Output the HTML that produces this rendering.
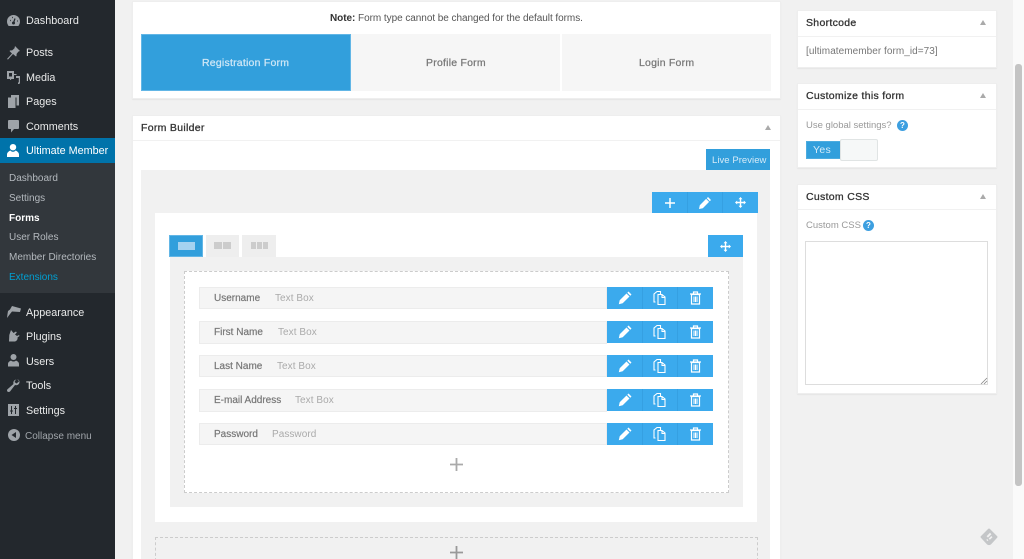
<!DOCTYPE html>
<html><head><meta charset="utf-8"><style>
*{box-sizing:border-box}
html,body{margin:0;padding:0;width:1024px;height:559px;overflow:hidden;background:#f1f1f1}
body{font-family:"Liberation Sans",sans-serif;position:relative}
.a,.t{position:absolute}
.t{white-space:nowrap;line-height:14px;filter:blur(.35px)}
.m{font-size:10.8px;color:#e9eaea;left:26px}
.s{font-size:10px;color:#b4b9be;left:9px}
.card{position:absolute;background:#fff;box-shadow:0 1px 1px rgba(0,0,0,.05);border:1px solid #eee}
.b{position:absolute;background:#3baaed}
.l{font-size:10px;color:#777;-webkit-text-stroke:.2px #777}
.g{font-size:10px;color:#aaa;letter-spacing:.05px}
.h{font-size:10.5px;color:#333;letter-spacing:.3px;-webkit-text-stroke:.3px #333}
.tb{font-size:10.5px;letter-spacing:.22px;-webkit-text-stroke:.25px currentColor}
svg{position:absolute;overflow:visible;filter:blur(.3px)}
.i{fill:#9ea3a8}
</style></head><body>
<div class="a" style="left:0;top:0;width:115px;height:559px;background:#23282d"></div>
<div class="a" style="left:0;top:163px;width:115px;height:130px;background:#32373c"></div>
<div class="a" style="left:0;top:138px;width:115px;height:25px;background:#0073aa"></div>
<div class="a" style="left:1013px;top:0;width:11px;height:559px;background:#fafafa"></div>
<div class="a" style="left:1015px;top:64px;width:7px;height:422px;background:#c4c4c4;border-radius:3px"></div>

<!-- sidebar icons -->
<svg style="left:7px;top:14px" width="14" height="13" viewBox="0 0 14 13"><path class="i" d="M6.5 1a6.500 6.500 0 0 0-6.500 6.500c0 1.800.6 3 1.600 4.500h9.800c1-1.500 1.600-2.700 1.600-4.500A6.500 6.500 0 0 0 6.500 1z"/><circle cx="6.500" cy="9" r="1.500" fill="#23282d"/><path d="M6.500 9l1.500-4.500M3 6.500h.8M10 7h.8M5 3.500h.8" stroke="#23282d" stroke-width="1.200"/></svg>
<svg style="left:7px;top:46px" width="13" height="14" viewBox="0 0 13 14"><path class="i" d="M8 0l5 5-1.500.5-2 2.500c.3 1.200 0 2-.5 2.500L6 8 1 13.500 0 13l5-5.500L2.500 5c.6-.6 1.500-.8 2.500-.5l2.500-2.200z"/></svg>
<svg style="left:7px;top:71px" width="13" height="13" viewBox="0 0 13 13"><path class="i" fill-rule="evenodd" d="M0 0h7v3h2.500v1H7v4H4.500l-1 1H3V8H0zM2 2v3.500h3V2z"/><path class="i" d="M9 5h4v7c0 .8-1 1-2 1v-1.500c.5 0 .8-.2.800-.5V7H9z"/></svg>
<svg style="left:8px;top:95px" width="11" height="13" viewBox="0 0 11 13"><path class="i" d="M3 0h8v10.500H8.500V2.500H3z"/><path class="i" d="M0 2.500h7.500V13H0z"/></svg>
<svg style="left:8px;top:120px" width="11" height="13" viewBox="0 0 11 13"><path class="i" d="M1 0h9a1 1 0 0 1 1 1v7a1 1 0 0 1-1 1H6l-3 3.500V9H1a1 1 0 0 1-1-1V1a1 1 0 0 1 1-1z"/></svg>
<svg style="left:7px;top:144px" width="12" height="13" viewBox="0 0 12 13"><circle cx="6" cy="3.200" r="3.200" fill="#fff"/><path fill="#fff" d="M0 13v-2.500c0-2 2-3.500 3.500-4 .7 1 1.500 1.300 2.500 1.300s1.800-.3 2.500-1.300c1.500.5 3.500 2 3.500 4V13z"/></svg>
<svg style="left:7px;top:306px" width="14" height="12" viewBox="0 0 14 12"><path class="i" d="M5 0l9 2.500-1 3.500-8-.5-2 2.500-3 4 .5-4 .5-3 2-1.500z"/></svg>
<svg style="left:7px;top:330px" width="13" height="13" viewBox="0 0 13 13"><path class="i" d="M4 0l2.500 3L9 1.500l.8 1L8 4.500l2 1.500 2-1 .5 1-2 1.500c.5 2-1 3.500-2.500 4H2l.3-6.500z"/></svg>
<svg style="left:8px;top:354px" width="11" height="13" viewBox="0 0 11 13"><circle cx="5.500" cy="3" r="3" class="i"/><path class="i" d="M0 12.500V10c0-2 2-3 3-3.500.7.700 1.500 1 2.500 1s1.800-.3 2.500-1c1 .5 3 1.500 3 3.500v2.500z"/></svg>
<svg style="left:7px;top:379px" width="13" height="13" viewBox="0 0 13 13"><path class="i" d="M9 0c2 0 3.500 1.200 3.500 3 0 2.300-2.300 3.800-4.500 3L3 12.500c-1 1-3 .5-3-1 0-.5.200-.9.500-1.200L6.500 5c-.7-2 .5-4 2.500-4.500L7.500 3l2 1.500L12 2.500C11.500 1 10.500 0 9 0z"/></svg>
<svg style="left:8px;top:404px" width="11" height="12" viewBox="0 0 11 12"><path class="i" d="M0 0h11v12H0z"/><path d="M3.500 2v8M7.500 2v8" stroke="#23282d" stroke-width="1"/><path d="M2 7h3M6 4.500h3" stroke="#23282d" stroke-width="1"/></svg>
<svg style="left:8px;top:429px" width="12" height="12" viewBox="0 0 12 12"><circle cx="6" cy="6" r="6" class="i"/><path d="M8 3v6L3.500 6z" fill="#23282d"/></svg>

<!-- sidebar text -->
<div class="t m" style="top:14px">Dashboard</div>
<div class="t m" style="top:46px">Posts</div>
<div class="t m" style="top:71px">Media</div>
<div class="t m" style="top:95px">Pages</div>
<div class="t m" style="top:120px">Comments</div>
<div class="t m" style="top:144px;color:#fff">Ultimate Member</div>
<div class="t s" style="top:172px">Dashboard</div>
<div class="t s" style="top:192px">Settings</div>
<div class="t s" style="top:212px;color:#fff;font-weight:bold">Forms</div>
<div class="t s" style="top:231px">User Roles</div>
<div class="t s" style="top:251px">Member Directories</div>
<div class="t s" style="top:271px;color:#00a0d2">Extensions</div>
<div class="t m" style="top:306px">Appearance</div>
<div class="t m" style="top:330px">Plugins</div>
<div class="t m" style="top:355px">Users</div>
<div class="t m" style="top:379px">Tools</div>
<div class="t m" style="top:404px">Settings</div>
<div class="t s" style="top:430px;left:25px;color:#a0a5aa">Collapse menu</div>

<!-- top card -->
<div class="card" style="left:132px;top:1px;width:649px;height:98px"></div>
<div class="t" style="left:330px;top:12px;font-size:10px;color:#555;letter-spacing:-.05px"><b style="color:#333">Note:</b> Form type cannot be changed for the default forms.</div>
<div class="a" style="left:141px;top:34px;width:210px;height:57px;background:#329fdc;border:1px solid #62b6e6"></div>
<div class="a" style="left:351px;top:34px;width:209px;height:57px;background:#f6f6f6"></div>
<div class="a" style="left:562px;top:34px;width:209px;height:57px;background:#f6f6f6"></div>
<div class="t tb" style="left:202px;top:56px;color:#cfe7f6">Registration Form</div>
<div class="t tb" style="left:426px;top:56px;color:#777">Profile Form</div>
<div class="t tb" style="left:639px;top:56px;color:#777">Login Form</div>

<!-- form builder -->
<div class="card" style="left:132px;top:115px;width:649px;height:460px"></div>
<div class="a" style="left:133px;top:140px;width:647px;height:1px;background:#f1f1f1"></div>
<div class="t h" style="left:141px;top:121px">Form Builder</div>
<div class="a" style="left:765px;top:125px;border:3.500px solid transparent;border-top:0;border-bottom:5px solid #aaa"></div>
<div class="a" style="left:706px;top:149px;width:64px;height:21px;background:#329fdc"></div>
<div class="t" style="left:712px;top:154px;font-size:9.500px;color:#d6ebf8;letter-spacing:.05px">Live Preview</div>
<div class="a" style="left:141px;top:170px;width:629px;height:400px;background:#f1f1f1"></div>
<div class="a" style="left:155px;top:213px;width:602px;height:309px;background:#fff"></div>

<div class="b" style="left:652px;top:192px;width:105.500px;height:21px"></div>
<div class="a" style="left:687px;top:192px;width:1px;height:21px;background:#35a0e2"></div>
<div class="a" style="left:722px;top:192px;width:1px;height:21px;background:#35a0e2"></div>
<svg style="left:665px;top:198px" width="10" height="10"><path d="M5 0v10M0 5h10" stroke="#fff" stroke-width="1.500"/></svg>
<svg style="left:699px;top:197px" width="12" height="12" viewBox="0 0 12 12"><path fill="#fff" d="M9 0l3 3-1.200 1.200-3-3zM7.100 1.900l3 3L3.800 11.200 0 12l.8-3.800z"/></svg>
<svg style="left:735px;top:197px" width="11" height="11" viewBox="0 0 11 11"><path fill="#fff" d="M5.500 0L7.500 2.200H6.200V4.800H8.800V3.500L11 5.500 8.800 7.500V6.200H6.200V8.800H7.500L5.500 11 3.500 8.800H4.800V6.200H2.200V7.500L0 5.500 2.200 3.500V4.800H4.800V2.200H3.500z"/></svg>

<div class="a" style="left:169px;top:235px;width:34px;height:22px;background:#329fdc;border:1px solid #62b6e6"></div>
<div class="a" style="left:178px;top:242px;width:17px;height:8px;background:#a5d2f0"></div>
<div class="a" style="left:206px;top:235px;width:33px;height:22px;background:#eeeeee"></div>
<div class="a" style="left:214px;top:242px;width:8px;height:7px;background:#ccc"></div>
<div class="a" style="left:223px;top:242px;width:8px;height:7px;background:#ccc"></div>
<div class="a" style="left:242px;top:235px;width:34px;height:22px;background:#eeeeee"></div>
<div class="a" style="left:251px;top:242px;width:5px;height:7px;background:#ccc"></div>
<div class="a" style="left:257px;top:242px;width:5px;height:7px;background:#ccc"></div>
<div class="a" style="left:263px;top:242px;width:5px;height:7px;background:#ccc"></div>
<div class="b" style="left:708px;top:235px;width:35px;height:22px"></div>
<svg style="left:720px;top:241px" width="11" height="11" viewBox="0 0 11 11"><path fill="#fff" d="M5.500 0L7.500 2.200H6.200V4.800H8.800V3.500L11 5.500 8.800 7.500V6.200H6.200V8.800H7.500L5.500 11 3.500 8.800H4.800V6.200H2.200V7.500L0 5.500 2.200 3.500V4.800H4.800V2.200H3.500z"/></svg>

<div class="a" style="left:170px;top:257px;width:573px;height:250px;background:#f1f1f1"></div>
<div class="a" style="left:184px;top:271px;width:545px;height:222px;background:#fff;border:1px dashed #ccc"></div>

<!-- rows -->
<div class="a" style="left:199px;top:287px;width:408px;height:22px;background:#f5f5f5;border:1px solid #ececec"></div>
<div class="a" style="left:199px;top:321px;width:408px;height:23px;background:#f5f5f5;border:1px solid #ececec"></div>
<div class="a" style="left:199px;top:355px;width:408px;height:22px;background:#f5f5f5;border:1px solid #ececec"></div>
<div class="a" style="left:199px;top:389px;width:408px;height:23px;background:#f5f5f5;border:1px solid #ececec"></div>
<div class="a" style="left:199px;top:423px;width:408px;height:22px;background:#f5f5f5;border:1px solid #ececec"></div>
<div class="t l" style="left:214px;top:292px">Username</div><div class="t g" style="left:275px;top:292px">Text Box</div>
<div class="t l" style="left:214px;top:326px">First Name</div><div class="t g" style="left:278px;top:326px">Text Box</div>
<div class="t l" style="left:214px;top:360px">Last Name</div><div class="t g" style="left:277px;top:360px">Text Box</div>
<div class="t l" style="left:214px;top:394px">E-mail Address</div><div class="t g" style="left:295px;top:394px">Text Box</div>
<div class="t l" style="left:214px;top:428px">Password</div><div class="t g" style="left:272px;top:428px">Password</div>

<svg style="left:607px;top:287px" width="106" height="160" viewBox="0 0 106 160">
<defs>
<g id="r"><rect width="106" height="22" fill="#3baaed"/><path d="M35.500 0v22M70.500 0v22" stroke="#35a0e2"/>
<path fill="#fff" d="M21.500 4.500l3 3-1.200 1.200-3-3zM19.500 6.500l3 3-6.800 6.800-3.900.9.900-3.900z"/>
<path fill="none" stroke="#fff" stroke-width="1.100" d="M48.500 15h-1.500V7l3-2.500h3.500v2.500M51 7.500h4l3 2.500v7.500h-7zM55 7.500v3h3"/>
<path fill="none" stroke="#fff" stroke-width="1.200" d="M84.500 7.500h8v9.500h-8zM83 7h11M86.500 6.500v-1.500h4v1.500"/><path stroke="#fff" d="M87 9.500v5.500M88.500 9.500v5.500M90 9.500v5.500"/></g>
</defs>
<use href="#r" y="0"/><use href="#r" y="34"/><use href="#r" y="68"/><use href="#r" y="102"/><use href="#r" y="136"/>
</svg>

<svg style="left:450px;top:458px" width="13" height="13"><path d="M6.500 0v13M0 6.500h13" stroke="#aaa" stroke-width="1.800"/></svg>
<div class="a" style="left:155px;top:537px;width:603px;height:40px;border:1px dashed #ccc"></div>
<svg style="left:450px;top:546px" width="13" height="13"><path d="M6.500 0v13M0 6.500h13" stroke="#999" stroke-width="1.800"/></svg>

<!-- right cards -->
<div class="card" style="left:797px;top:10px;width:200px;height:58px"></div>
<div class="a" style="left:798px;top:36px;width:198px;height:1px;background:#f1f1f1"></div>
<div class="t h" style="left:806px;top:16px">Shortcode</div>
<div class="t g" style="left:806px;top:45px;color:#777">[ultimatemember form_id=73]</div>
<div class="a" style="left:980px;top:20px;border:3.500px solid transparent;border-top:0;border-bottom:5px solid #aaa"></div>

<div class="card" style="left:797px;top:83px;width:200px;height:85px"></div>
<div class="a" style="left:798px;top:109px;width:198px;height:1px;background:#f1f1f1"></div>
<div class="t h" style="left:806px;top:89px">Customize this form</div>
<div class="t g" style="left:806px;top:119px;color:#999;font-size:9.500px;letter-spacing:0">Use global settings?</div>
<div class="a" style="left:897px;top:120px;width:11px;height:11px;border-radius:50%;background:#3d9fe0;color:#fff;font:bold 8px/11px 'Liberation Sans',sans-serif;text-align:center">?</div>
<div class="a" style="left:806px;top:141px;width:35px;height:18px;background:#329fdc;border:1px solid #4dacdf"></div>
<div class="a" style="left:840px;top:139px;width:38px;height:22px;background:#f6f8f8;border:1px solid #e0e4e4;border-radius:2px"></div>
<div class="t" style="left:813px;top:143px;font-size:10.500px;color:#d6ebf8;letter-spacing:.3px">Yes</div>

<div class="card" style="left:797px;top:184px;width:200px;height:210px"></div>
<div class="a" style="left:798px;top:209px;width:198px;height:1px;background:#f1f1f1"></div>
<div class="t h" style="left:806px;top:190px">Custom CSS</div>
<div class="t g" style="left:806px;top:219px;color:#999;font-size:9.500px;letter-spacing:0">Custom CSS</div>
<div class="a" style="left:863px;top:220px;width:11px;height:11px;border-radius:50%;background:#3d9fe0;color:#fff;font:bold 8px/11px 'Liberation Sans',sans-serif;text-align:center">?</div>
<div class="a" style="left:805px;top:241px;width:183px;height:144px;background:#fff;border:1px solid #ddd"></div>
<svg style="left:981px;top:378px" width="6" height="6"><path d="M0 6L6 0M3 6L6 3" stroke="#888" stroke-width=".8"/></svg>
<div class="a" style="left:980px;top:93px;border:3.500px solid transparent;border-top:0;border-bottom:5px solid #aaa"></div>
<div class="a" style="left:980px;top:194px;border:3.500px solid transparent;border-top:0;border-bottom:5px solid #aaa"></div>

<!-- logo -->
<svg style="left:980px;top:528px" width="18" height="18" viewBox="0 0 18 18"><path d="M9 1.500L16.500 9 10.500 15.500a2 2 0 0 1-3 0L1.500 9z" fill="#c4c6c8" stroke="#c4c6c8" stroke-width="2" stroke-linejoin="round"/><path d="M10 4.800l1.400 1.400-3.400 3.400-1.400-1.400zM11.300 8l1.200 1.200-2.600 2.600-1.200-1.200zM7.200 11l1.200 1.200-.9.900-1.200-1.200z" fill="#f1f1f1"/></svg>
</body></html>
